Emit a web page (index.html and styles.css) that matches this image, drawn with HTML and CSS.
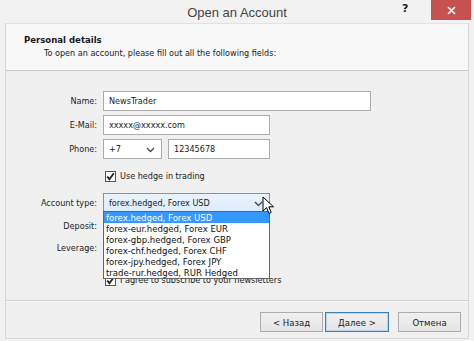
FILE: index.html
```html
<!DOCTYPE html>
<html>
<head>
<meta charset="utf-8">
<link rel="stylesheet" href="styles.css">
</head>
<body>
<div class="window">
  <div class="titlebar">
    <div class="title">Open an Account</div>
    <div class="help">?</div>
    <div class="close"><svg width="9" height="9" viewBox="0 0 9 9"><path d="M1 1 L8 8 M8 1 L1 8" stroke="#fff" stroke-width="1.6"/></svg></div>
  </div>
  <div class="frame">
    <div class="header">
      <div class="h-title">Personal details</div>
      <div class="h-sub">To open an account, please fill out all the following fields:</div>
    </div>
    <div class="form">
      <div class="row">
        <label class="lbl">Name:</label>
        <div class="input w-long">NewsTrader</div>
      </div>
      <div class="row">
        <label class="lbl">E-Mail:</label>
        <div class="input w-mid">xxxxx@xxxxx.com</div>
      </div>
      <div class="row">
        <label class="lbl">Phone:</label>
        <div class="input select w-code">+7<svg class="chev" width="9" height="6" viewBox="0 0 9 6"><path d="M1 1 L4.5 4.5 L8 1" fill="none" stroke="#444" stroke-width="1.3"/></svg></div>
        <div class="input w-phone">12345678</div>
      </div>
      <div class="row check-row">
        <span class="checkbox"><svg width="9" height="9" viewBox="0 0 9 9"><path d="M1.2 4.6 L3.5 7.2 L7.8 1.2" fill="none" stroke="#222" stroke-width="1.8"/></svg></span>
        <span class="check-text">Use hedge in trading</span>
      </div>
      <div class="row acct-row">
        <label class="lbl">Account type:</label>
        <div class="combo-wrap">
          <div class="input select w-mid focus">forex.hedged, Forex USD<svg class="chev" width="9" height="6" viewBox="0 0 9 6"><path d="M1 1 L4.5 4.5 L8 1" fill="none" stroke="#444" stroke-width="1.3"/></svg></div>
          <ul class="dropdown">
            <li class="sel">forex.hedged, Forex USD</li>
            <li>forex-eur.hedged, Forex EUR</li>
            <li>forex-gbp.hedged, Forex GBP</li>
            <li>forex-chf.hedged, Forex CHF</li>
            <li>forex-jpy.hedged, Forex JPY</li>
            <li>trade-rur.hedged, RUR Hedged</li>
          </ul>
          <svg class="cursor" width="14" height="20" viewBox="0 0 14 20"><path d="M1 1 L1 15 L4.5 11.5 L7 17.5 L9.2 16.5 L6.8 10.8 L11.5 10.8 Z" fill="#fff" stroke="#000" stroke-width="1"/></svg>
        </div>
      </div>
      <div class="row dep-row">
        <label class="lbl">Deposit:</label>
      </div>
      <div class="row lev-row">
        <label class="lbl">Leverage:</label>
      </div>
      <div class="row check-row news-row">
        <span class="checkbox"><svg width="9" height="9" viewBox="0 0 9 9"><path d="M1.2 4.6 L3.5 7.2 L7.8 1.2" fill="none" stroke="#222" stroke-width="1.8"/></svg></span>
        <span class="check-text">I agree to subscribe to your newsletters</span>
      </div>
    </div>
    <div class="footer">
      <button class="btn">&lt; Назад</button>
      <button class="btn default">Далее &gt;</button>
      <button class="btn cancel">Отмена</button>
    </div>
  </div>
</div>
</body>
</html>
```
FILE: styles.css
```css
html, body {
  margin: 0;
  padding: 0;
}
body {
  width: 474px;
  height: 341px;
  overflow: hidden;
  background: #f2f2f2;
  font-family: "DejaVu Sans Condensed", "DejaVu Sans", sans-serif;
  font-size: 9px;
  color: #1a1a1a;
}
.window {
  width: 474px;
  height: 341px;
  display: flex;
  flex-direction: column;
}
.titlebar {
  height: 23px;
  display: flex;
  align-items: center;
  position: relative;
  flex: none;
}
.title {
  flex: 1;
  text-align: center;
  font-family: "Liberation Sans", sans-serif;
  font-size: 13px;
  color: #444;
  padding-top: 1px;
}
.help {
  position: absolute;
  left: 402px;
  top: 2px;
  font-family: "DejaVu Sans", sans-serif;
  font-weight: bold;
  font-size: 11px;
  color: #222;
}
.close {
  position: absolute;
  left: 431px;
  top: 0;
  width: 40px;
  height: 20px;
  background: #c75050;
  display: flex;
  align-items: center;
  justify-content: center;
}
.frame {
  margin: 0 5px 2px 5px;
  border: 1px solid #d6d6d6;
  border-top: none;
  flex: 1;
  display: flex;
  flex-direction: column;
  background: #f0f0f0;
}
.header {
  height: 48px;
  box-sizing: border-box;
  background: #f8f8f8;
  border-top: 1px solid #e2e2e2;
  border-bottom: 1px solid #c9c9c9;
  padding: 9px 0 0 18px;
  flex: none;
}
.h-title {
  font-weight: bold;
  font-size: 9.5px;
  height: 14px;
  line-height: 14px;
}
.h-sub {
  padding-left: 20px;
  line-height: 13px;
  color: #222;
}
.form {
  flex: 1;
  padding-top: 20px;
  display: flex;
  flex-direction: column;
  gap: 4px;
}
.row {
  display: flex;
  align-items: center;
  height: 20px;
  gap: 6px;
}
.lbl {
  width: 91px;
  text-align: right;
  color: #222;
}
.input {
  height: 20px;
  box-sizing: border-box;
  border: 1px solid #acacac;
  background: #fff;
  padding: 0 5px;
  line-height: 18px;
  white-space: nowrap;
  display: flex;
  align-items: center;
  position: relative;
}
.w-long { width: 268px; }
.w-mid { width: 167px; }
.w-code { width: 59px; }
.w-phone { width: 102px; }
.select .chev {
  position: absolute;
  right: 6px;
  top: 7px;
}
.check-row {
  margin-top: 6px;
  height: 14px;
  padding-left: 99px;
  gap: 4px;
}
.checkbox {
  width: 11px;
  height: 11px;
  box-sizing: border-box;
  border: 1px solid #555;
  background: #fff;
  display: flex;
  align-items: center;
  justify-content: center;
}
.acct-row {
  margin-top: 6px;
}
.dep-row {
  margin-top: -1px;
}
.lev-row {
  margin-top: -2px;
}
.combo-wrap {
  position: relative;
}
.focus {
  border-color: #569de5;
  background: linear-gradient(#eaf3fc, #dcecfc);
}
.dropdown {
  position: absolute;
  left: 0;
  top: 18px;
  width: 167px;
  box-sizing: border-box;
  margin: 0;
  padding: 0;
  list-style: none;
  background: #fff;
  border: 1px solid #646464;
  z-index: 2;
}
.dropdown li {
  height: 11px;
  line-height: 11px;
  padding-left: 2px;
  font-size: 9.5px;
  white-space: nowrap;
  color: #111;
}
.dropdown li.sel {
  background: #3399ff;
  color: #fff;
}
.cursor {
  position: absolute;
  left: 159px;
  top: 3px;
  z-index: 3;
}
.news-row {
  margin-top: 11px;
}
.footer {
  height: 38px;
  flex: none;
  border-top: 1px solid #cfcfcf;
  box-shadow: inset 0 1px 0 #fbfbfb;
  display: flex;
  align-items: flex-start;
  padding: 11px 7px 0 0;
  box-sizing: border-box;
  justify-content: flex-end;
  gap: 2px;
}
.btn {
  width: 63px;
  height: 20px;
  font-family: "DejaVu Sans Condensed", "DejaVu Sans", sans-serif;
  font-size: 9.5px;
  color: #222;
  background: linear-gradient(#f0f0f0, #e5e5e5);
  border: 1px solid #acacac;
  padding: 0;
}
.btn.default {
  width: 64px;
  border-color: #3c7fb1;
  box-shadow: inset 0 0 0 1px #b8d6f0;
}
.btn.cancel {
  margin-left: 7px;
}
```
